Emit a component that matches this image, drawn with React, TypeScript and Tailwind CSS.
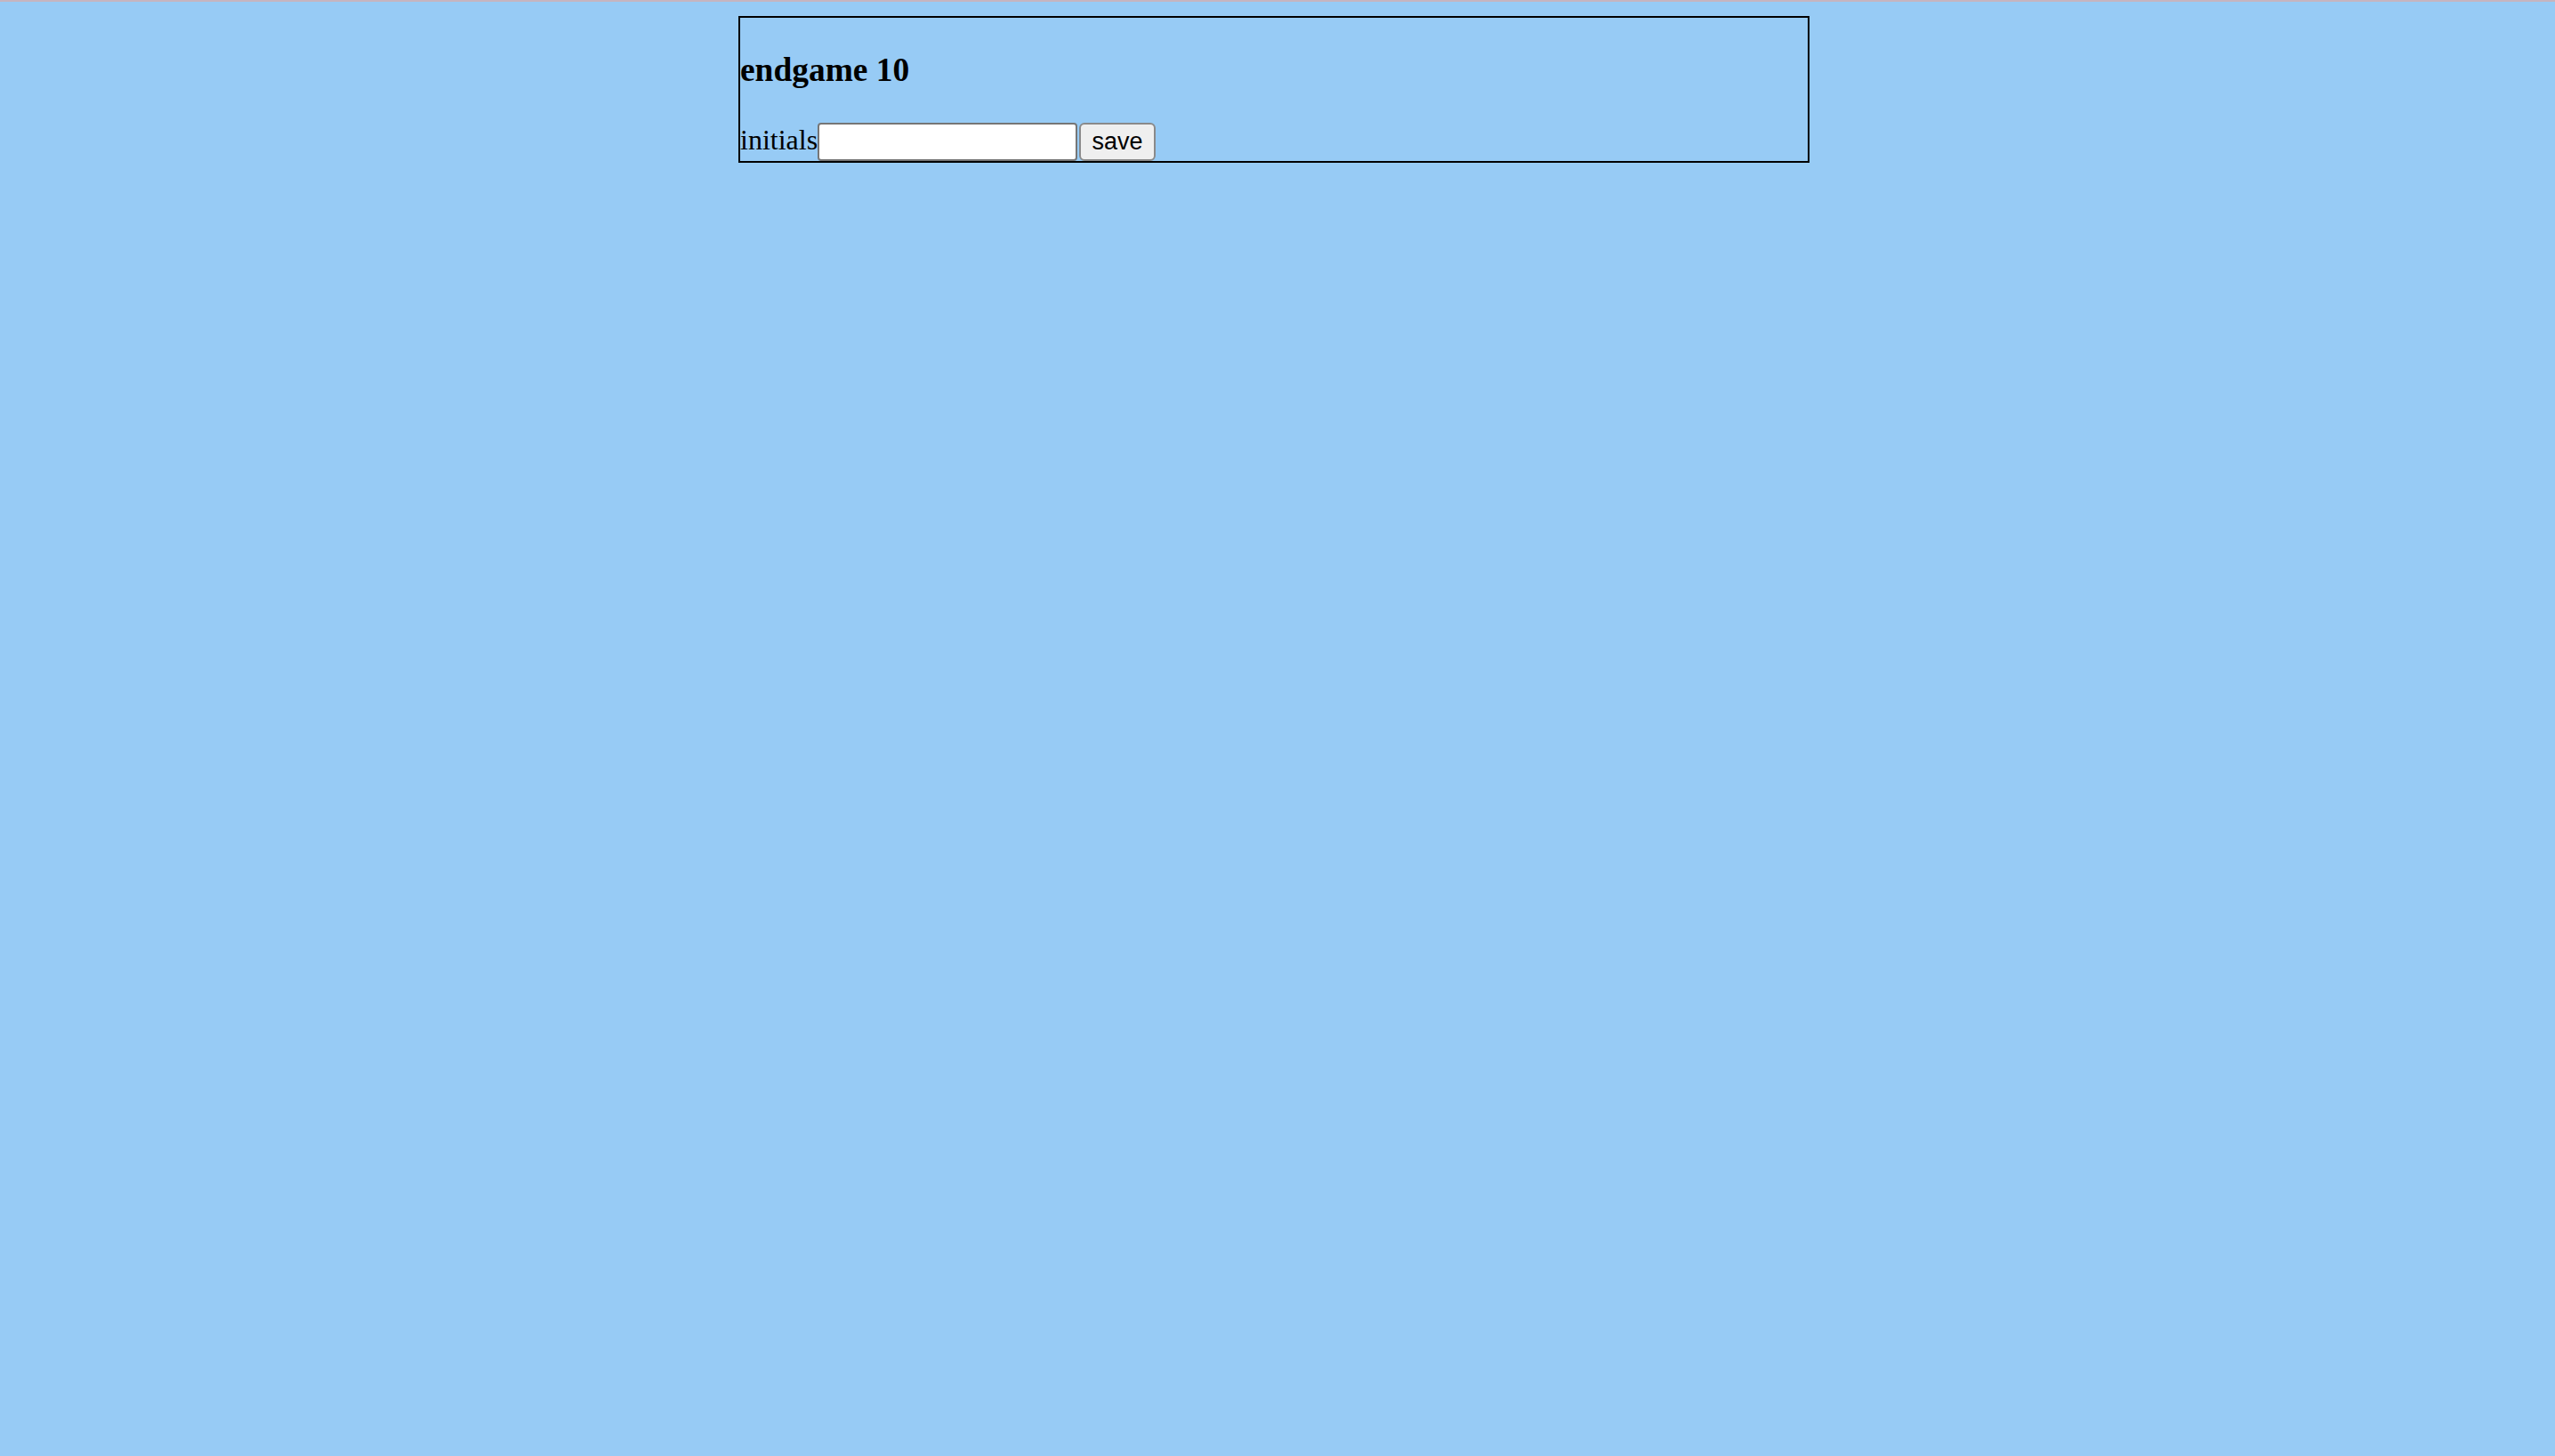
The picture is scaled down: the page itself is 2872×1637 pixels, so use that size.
import React from "react";

export default function App() {
  return (
    <div className="h-screen bg-[#97cbf5] font-['Liberation_Serif','Times_New_Roman',serif] text-[32px] leading-[normal] text-black">
      <div className="h-[2px] bg-[#c6b5bf]" />
      <div className="pt-[16px]">
        <div className="ml-[830px] w-[1204px] border-2 border-black">
          <h3 className="my-[37.44px] text-[37.44px] font-bold leading-[normal]">endgame 10</h3>
          <div className="leading-[normal]">
            initials
            <input
              type="text"
              className="box-border inline-block h-[43px] w-[292px] rounded-[4px] border-2 border-[#767676] bg-white px-[4px] py-[2px] align-baseline font-['Liberation_Sans',Arial,sans-serif] text-[26.67px] leading-[normal] text-black outline-none"
            />
            <button
              type="button"
              className="ml-[2px] box-border inline-block h-[43px] w-[86px] rounded-[6px] border-2 border-[#8a8a8a] bg-[#efefef] px-[12px] py-[2px] align-baseline font-['Liberation_Sans',Arial,sans-serif] text-[27px] leading-[normal] text-black"
            >
              save
            </button>
          </div>
        </div>
      </div>
    </div>
  );
}
